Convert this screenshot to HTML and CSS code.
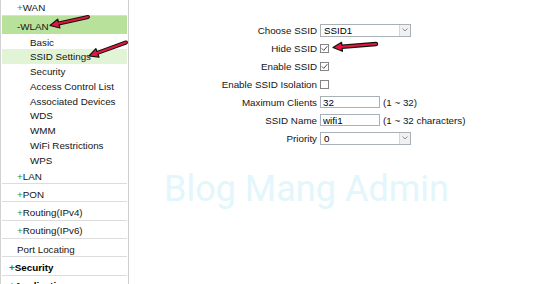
FILE: index.html
```html
<!DOCTYPE html>
<html>
<head>
<meta charset="utf-8">
<link rel="stylesheet" href="styles.css">
</head>
<body>
<div class="page">
  <nav class="side">
    <div class="row l2 first"><span class="plus">+</span>WAN</div>
    <div class="row l2 open">-WLAN</div>
    <div class="sub">
      <div class="item">Basic</div>
      <div class="item sel">SSID Settings</div>
      <div class="item">Security</div>
      <div class="item">Access Control List</div>
      <div class="item">Associated Devices</div>
      <div class="item">WDS</div>
      <div class="item">WMM</div>
      <div class="item">WiFi Restrictions</div>
      <div class="item">WPS</div>
    </div>
    <div class="row l2 lan"><span class="plus">+</span>LAN</div>
    <div class="row l2"><span class="plus">+</span>PON</div>
    <div class="row l2"><span class="plus">+</span>Routing(IPv4)</div>
    <div class="row l2"><span class="plus">+</span>Routing(IPv6)</div>
    <div class="row l2">Port Locating</div>
    <div class="row l1"><span class="plus">+</span>Security</div>
    <div class="row l1"><span class="plus">+</span>Application</div>
  </nav>
  <main class="main">
    <div class="form">
      <div class="lbl">Choose SSID</div>
      <div class="ctl">
        <div class="dd"><span class="ddv">SSID1</span><span class="ddb"><svg width="6" height="4" viewBox="0 0 6 4"><path d="M0.5 0.5 L3 3 L5.5 0.5" fill="none" stroke="#8c8c8c" stroke-width="1"/></svg></span></div>
      </div>
      <div class="lbl">Hide SSID</div>
      <div class="ctl"><span class="cb"><svg width="7" height="7" viewBox="0 0 7 7"><path d="M0.8 3.4 L2.8 5.4 L6.3 1.2" fill="none" stroke="#4a4a4a" stroke-width="1"/></svg></span></div>
      <div class="lbl">Enable SSID</div>
      <div class="ctl"><span class="cb"><svg width="7" height="7" viewBox="0 0 7 7"><path d="M0.8 3.4 L2.8 5.4 L6.3 1.2" fill="none" stroke="#4a4a4a" stroke-width="1"/></svg></span></div>
      <div class="lbl">Enable SSID Isolation</div>
      <div class="ctl"><span class="cb"></span></div>
      <div class="lbl">Maximum Clients</div>
      <div class="ctl"><input class="txt" type="text" value="32"><span class="hint">(1 ~ 32)</span></div>
      <div class="lbl">SSID Name</div>
      <div class="ctl"><input class="txt" type="text" value="wifi1"><span class="hint">(1 ~ 32 characters)</span></div>
      <div class="lbl">Priority</div>
      <div class="ctl">
        <div class="dd"><span class="ddv">0</span><span class="ddb"><svg width="6" height="4" viewBox="0 0 6 4"><path d="M0.5 0.5 L3 3 L5.5 0.5" fill="none" stroke="#8c8c8c" stroke-width="1"/></svg></span></div>
      </div>
    </div>
  </main>
  <div class="wm">Blog Mang Admin</div>
  <svg class="arrows" width="540" height="284" viewBox="0 0 540 284">
    <g stroke-linecap="round" stroke-linejoin="round">
      <line x1="88" y1="17" x2="58.8" y2="23.5" stroke="#111" stroke-width="4"/>
      <polygon points="50,25.5 57.7,19.1 59.9,28" fill="#e3173e" stroke="#111" stroke-width="1.2"/>
      <line x1="88" y1="17" x2="57.5" y2="23.8" stroke="#e3173e" stroke-width="2"/>

      <line x1="126" y1="42.5" x2="97.4" y2="52.9" stroke="#111" stroke-width="4"/>
      <polygon points="89,56 95.9,48.7 99,57.1" fill="#e3173e" stroke="#111" stroke-width="1.2"/>
      <line x1="126" y1="42.5" x2="96.4" y2="53.3" stroke="#e3173e" stroke-width="2"/>

      <line x1="376" y1="44" x2="342" y2="46.8" stroke="#111" stroke-width="4.4"/>
      <polygon points="333,47.5 341.6,42.3 342.4,51.3" fill="#e3173e" stroke="#111" stroke-width="1.2"/>
      <line x1="376" y1="44" x2="340.5" y2="46.9" stroke="#e3173e" stroke-width="2.2"/>
    </g>
  </svg>
</div>
</body>
</html>
```
FILE: styles.css
```css
* { box-sizing: border-box; margin: 0; padding: 0; }
html, body { width: 540px; height: 284px; overflow: hidden; background: #fff; }
body { font-family: "Liberation Sans", Arial, sans-serif; font-size: 9.8px; color: #151515; }

.page { position: relative; display: flex; height: 284px; }

.side {
  width: 129px; flex: none; height: 100%; overflow: hidden;
  border-left: 1px solid #d2d2d2; border-right: 1px solid #cfcfcf;
  padding: 0 1px;
}
.row {
  height: 18.3px; display: flex; align-items: center; padding-top: 3px;
  border-bottom: 1px solid #dcdcdc; white-space: nowrap;
}
.row.first { margin-top: -2.6px; }
.l2 { padding-left: 15px; }
.l1 { padding-left: 7px; font-weight: bold; color: #000; }
.row.open { background: #b8e29b; border-bottom: none; height: 18px; }
.row.lan { height: 16.6px; }
.plus { color: #129612; }

.sub { padding-top: 1px; }
.item { height: 14.75px; display: flex; align-items: center; padding-left: 28px; white-space: nowrap; }
.item.sel { background: #e2f4d6; }

.main { flex: 1; position: relative; }
.form {
  display: grid; grid-template-columns: 102px auto; column-gap: 3px;
  grid-auto-rows: 18px; align-items: center;
  margin: 21px 0 0 86px;
}
.lbl { text-align: right; white-space: nowrap; }
.ctl { display: flex; align-items: center; }

.dd {
  width: 91px; height: 13px; border: 1px solid #a9b0b8; background: #fff;
  display: flex; align-items: stretch; color: #000;
}
.ddv { flex: 1; padding-left: 3px; display: flex; align-items: center; }
.ddb {
  width: 11px; background: #f1f1f1; border-left: 1px solid #d6d6d6;
  display: flex; align-items: center; justify-content: center;
}

.cb {
  width: 9px; height: 9px; border: 1px solid #858585; background: #fff;
  display: flex; align-items: center; justify-content: center;
}
.cb svg { display: block; }

.txt {
  width: 60px; height: 12px; border: 1px solid #a9b0b8; padding: 0 2px;
  font: inherit; color: #000; background: #fff; outline: none;
}
.hint { margin-left: 3px; white-space: nowrap; }

.wm {
  position: absolute; left: 164px; top: 171.4px;
  font-family: Roboto, "Liberation Sans", sans-serif; font-size: 36px; line-height: 1;
  color: #e3f6fc; white-space: nowrap; pointer-events: none;
}
.arrows { position: absolute; left: 0; top: 0; pointer-events: none; }
```
